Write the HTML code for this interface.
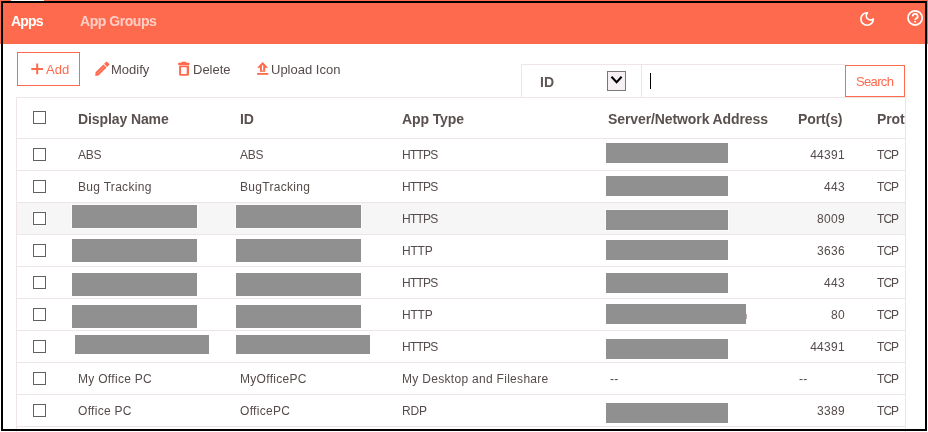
<!DOCTYPE html>
<html><head><meta charset="utf-8">
<style>
html,body{margin:0;padding:0;}
body{width:928px;height:432px;position:relative;overflow:hidden;background:#fff;font-family:"Liberation Sans",sans-serif;color:#564b4b;}
.a{position:absolute;white-space:nowrap;}
#hdr{position:absolute;left:0;top:0;width:928px;height:44px;background:#fe6a4e;}
.tab{position:absolute;font-weight:bold;font-size:14px;color:#fff;top:13px;}
.bd{position:absolute;background:#000;}
.btn{position:absolute;box-sizing:border-box;border:1px solid #fe6a4e;}
.tb{position:absolute;font-size:13px;color:#564b4b;top:62px;}
.hl{position:absolute;left:16px;width:890px;height:1px;background:#eee5e7;}
.th{position:absolute;font-weight:bold;font-size:14px;color:#5b5050;top:111px;letter-spacing:-0.1px;}
.td{position:absolute;font-size:12px;color:#564b4b;letter-spacing:0.3px;}
.cb{position:absolute;left:33px;width:13px;height:13px;box-sizing:border-box;border:1px solid #626060;background:#fff;box-shadow:0 0 0 1px rgba(255,255,255,0.6);}
.g{position:absolute;background:#909090;}
</style></head><body>
<div id="root" style="position:absolute;left:0;top:0;width:928px;height:432px;will-change:transform">
<div id="hdr"></div>
<div class="a" style="left:11px;top:0;width:33px;height:1px;background:#fff"></div>
<div class="tab" style="left:11px;letter-spacing:-0.8px">Apps</div>
<div class="tab" style="left:80px;letter-spacing:-0.45px;color:rgba(255,255,255,0.68)">App Groups</div>
<!-- moon -->
<svg class="a" style="left:855px;top:8px" width="24" height="22" viewBox="0 0 24 22">
<path d="M12.45 4.81 A6.2 6.2 0 1 0 18.3 10.83 A4.2 4.2 0 0 1 12.45 4.81 Z" fill="none" stroke="#fff" stroke-width="1.65" stroke-linejoin="round"/>
</svg>
<!-- help -->
<svg class="a" style="left:903px;top:6px" width="24" height="24" viewBox="0 0 24 24">
<circle cx="12.1" cy="11.95" r="7.1" fill="none" stroke="#fff" stroke-width="1.7"/>
<path d="M9.75 10.4 A2.45 2.45 0 1 1 13.1 12.6 C12.3 13 12.1 13.2 12.1 13.9" fill="none" stroke="#fff" stroke-width="1.7"/>
<circle cx="12.1" cy="15.75" r="1" fill="#fff"/>
</svg>

<!-- toolbar -->
<div class="btn" style="left:17px;top:52px;width:63px;height:34px"></div>
<svg class="a" style="left:28px;top:58px" width="20" height="22" viewBox="0 0 20 22"><path d="M9.2 5.4V16.3M3.3 11H15" stroke="#fe6a4e" stroke-width="2"/></svg>
<div class="tb" style="left:46px;top:62px;color:#fe6a4e">Add</div>
<svg class="a" style="left:90px;top:58px" width="24" height="22" viewBox="0 0 24 22">
<g transform="translate(11.9 11.1) rotate(-45)">
<path d="M-9.6 0.3 L-6.8 -2.2 H8 Q8.9 -2.2 8.9 -1.3 V1.3 Q8.9 2.2 8 2.2 H-7 Z" fill="#fe6a4e"/>
<rect x="4.4" y="-2.6" width="0.85" height="5.2" fill="#fff"/>
<rect x="-6.5" y="-0.25" width="10" height="0.5" fill="#fff" opacity="0.55"/>
</g>
</svg>
<div class="tb" style="left:111px">Modify</div>
<svg class="a" style="left:174px;top:58px" width="20" height="22" viewBox="0 0 20 22">
<rect x="7.4" y="3.8" width="5" height="1.4" rx="0.6" fill="#fe6a4e"/>
<rect x="4.1" y="4.8" width="11.4" height="2.1" rx="0.7" fill="#fe6a4e"/>
<path fill-rule="evenodd" fill="#fe6a4e" d="M5.1 7.4 H15 V16.3 Q15 17.8 13.5 17.8 H6.6 Q5.1 17.8 5.1 16.3 Z M7.1 9.2 V16 H12.7 V9.2 Z"/>
</svg>
<div class="tb" style="left:193px">Delete</div>
<svg class="a" style="left:252px;top:58px" width="22" height="22" viewBox="0 0 22 22">
<path fill-rule="evenodd" fill="#fe6a4e" d="M10.7 4.1 L16.1 9.7 H13.2 V13.7 H7.9 V9.7 H5.1 Z M9.9 7.6 V12.5 H11.2 V7.6 Q10.55 6.9 9.9 7.6 Z"/>
<rect x="5.1" y="15" width="11.1" height="1.8" fill="#fe6a4e"/>
</svg>
<div class="tb" style="left:271px">Upload Icon</div>

<!-- search -->
<div class="a" style="left:521px;top:64px;width:324px;height:34px;box-sizing:border-box;border:1px solid #eee5e7;border-right:none"></div>
<div class="a" style="left:641px;top:64px;width:1px;height:34px;background:#eee5e7"></div>
<div class="a" style="left:540px;top:74px;font-size:14px;font-weight:bold;color:#605656">ID</div>
<div class="a" style="left:607px;top:71px;width:19px;height:20px;box-sizing:border-box;border:1px solid #7a7778;background:#f6f0f5"></div>
<svg class="a" style="left:607px;top:71px" width="19" height="19" viewBox="0 0 19 19"><path d="M4.5 5.8 L9.6 11.2 L14.6 5.8" fill="none" stroke="#000" stroke-width="2.1"/></svg>
<div class="a" style="left:650px;top:73px;width:1px;height:16px;background:#000"></div>
<div class="btn" style="left:845px;top:65px;width:60px;height:32px"></div>
<div class="a" style="left:856px;top:74px;font-size:13px;color:#fe6a4e;letter-spacing:-0.65px">Search</div>

<!-- table -->
<div class="a" style="left:16px;top:97px;width:890px;height:340px;box-sizing:border-box;border:1px solid #eee5e7;border-bottom:none"></div>
<div class="a" style="left:17px;top:203px;width:888px;height:31px;background:#f6f6f6"></div>
<div class="hl" style="top:138px"></div>
<div class="hl" style="top:170px"></div>
<div class="hl" style="top:202px"></div>
<div class="hl" style="top:234px"></div>
<div class="hl" style="top:266px"></div>
<div class="hl" style="top:298px"></div>
<div class="hl" style="top:330px"></div>
<div class="hl" style="top:362px"></div>
<div class="hl" style="top:394px"></div>
<div class="hl" style="top:426px"></div>

<div class="cb" style="top:111px"></div>
<div class="th" style="left:78px">Display Name</div>
<div class="th" style="left:240px">ID</div>
<div class="th" style="left:402px">App Type</div>
<div class="th" style="left:608px">Server/Network Address</div>
<div class="th" style="left:798px">Port(s)</div>
<div class="a" style="left:877px;top:98px;width:28px;height:40px;overflow:hidden"><div class="th" style="left:0;top:13px">Protocol</div></div>

<!-- rows -->
<div class="cb" style="top:148px"></div>
<div class="td" style="left:78px;top:148px;letter-spacing:-0.3px">ABS</div>
<div class="td" style="left:240px;top:148px;letter-spacing:-0.3px">ABS</div>
<div class="td" style="left:402px;top:148px;letter-spacing:-0.75px">HTTPS</div>
<div class="g" style="left:606px;top:143px;width:122px;height:20px"></div>
<div class="td" style="left:745px;width:100px;text-align:right;top:148px">44391</div>
<div class="td" style="left:877px;top:148px;letter-spacing:-0.95px">TCP</div>

<div class="cb" style="top:180px"></div>
<div class="td" style="left:78px;top:180px">Bug Tracking</div>
<div class="td" style="left:240px;top:180px">BugTracking</div>
<div class="td" style="left:402px;top:180px;letter-spacing:-0.75px">HTTPS</div>
<div class="g" style="left:606px;top:176px;width:122px;height:20px"></div>
<div class="td" style="left:745px;width:100px;text-align:right;top:180px">443</div>
<div class="td" style="left:877px;top:180px;letter-spacing:-0.95px">TCP</div>

<div class="cb" style="top:212px"></div>
<div class="g" style="left:72px;top:205px;width:125px;height:23px;box-shadow:0 0 0 1px #fcfcfc"></div>
<div class="g" style="left:236px;top:205px;width:125px;height:23px;box-shadow:0 0 0 1px #fcfcfc"></div>
<div class="td" style="left:402px;top:212px;letter-spacing:-0.75px">HTTPS</div>
<div class="g" style="left:606px;top:210px;width:122px;height:20px;box-shadow:0 0 0 1px #fcfcfc"></div>
<div class="td" style="left:745px;width:100px;text-align:right;top:212px">8009</div>
<div class="td" style="left:877px;top:212px;letter-spacing:-0.95px">TCP</div>

<div class="cb" style="top:244px"></div>
<div class="g" style="left:72px;top:239px;width:125px;height:23px"></div>
<div class="g" style="left:236px;top:239px;width:125px;height:23px"></div>
<div class="td" style="left:402px;top:244px;letter-spacing:-0.2px">HTTP</div>
<div class="g" style="left:606px;top:240px;width:122px;height:20px"></div>
<div class="td" style="left:745px;width:100px;text-align:right;top:244px">3636</div>
<div class="td" style="left:877px;top:244px;letter-spacing:-0.95px">TCP</div>

<div class="cb" style="top:276px"></div>
<div class="g" style="left:72px;top:273px;width:125px;height:23px"></div>
<div class="g" style="left:236px;top:273px;width:125px;height:23px"></div>
<div class="td" style="left:402px;top:276px;letter-spacing:-0.75px">HTTPS</div>
<div class="g" style="left:606px;top:273px;width:122px;height:20px"></div>
<div class="td" style="left:745px;width:100px;text-align:right;top:276px">443</div>
<div class="td" style="left:877px;top:276px;letter-spacing:-0.95px">TCP</div>

<div class="cb" style="top:308px"></div>
<div class="g" style="left:72px;top:305px;width:125px;height:23px"></div>
<div class="g" style="left:236px;top:305px;width:125px;height:23px"></div>
<div class="td" style="left:402px;top:308px;letter-spacing:-0.2px">HTTP</div>
<div class="g" style="left:606px;top:304px;width:140px;height:20px"></div>
<div class="a" style="left:746px;top:314px;width:1px;height:5px;background:#b8a8ac"></div>
<div class="td" style="left:745px;width:100px;text-align:right;top:308px">80</div>
<div class="td" style="left:877px;top:308px;letter-spacing:-0.95px">TCP</div>

<div class="cb" style="top:340px"></div>
<div class="g" style="left:75px;top:335px;width:134px;height:19px"></div>
<div class="g" style="left:236px;top:335px;width:134px;height:19px"></div>
<div class="td" style="left:402px;top:340px;letter-spacing:-0.75px">HTTPS</div>
<div class="g" style="left:606px;top:339px;width:122px;height:20px"></div>
<div class="td" style="left:745px;width:100px;text-align:right;top:340px">44391</div>
<div class="td" style="left:877px;top:340px;letter-spacing:-0.95px">TCP</div>

<div class="cb" style="top:372px"></div>
<div class="td" style="left:78px;top:372px">My Office PC</div>
<div class="td" style="left:240px;top:372px">MyOfficePC</div>
<div class="td" style="left:402px;top:372px">My Desktop and Fileshare</div>
<div class="td" style="left:610px;top:372px">--</div>
<div class="td" style="left:799px;top:372px">--</div>
<div class="td" style="left:877px;top:372px;letter-spacing:-0.95px">TCP</div>

<div class="cb" style="top:404px"></div>
<div class="td" style="left:78px;top:404px">Office PC</div>
<div class="td" style="left:240px;top:404px">OfficePC</div>
<div class="td" style="left:402px;top:404px;letter-spacing:-0.2px">RDP</div>
<div class="g" style="left:606px;top:403px;width:122px;height:20px"></div>
<div class="td" style="left:745px;width:100px;text-align:right;top:404px">3389</div>
<div class="td" style="left:877px;top:404px;letter-spacing:-0.95px">TCP</div>

<!-- annotation border -->
<div class="bd" style="left:1px;top:1px;width:926px;height:2px"></div>
<div class="bd" style="left:1px;top:429px;width:926px;height:2px"></div>
<div class="bd" style="left:1px;top:1px;width:2px;height:430px"></div>
<div class="bd" style="left:925px;top:1px;width:2px;height:430px"></div>
</div>
</body></html>
